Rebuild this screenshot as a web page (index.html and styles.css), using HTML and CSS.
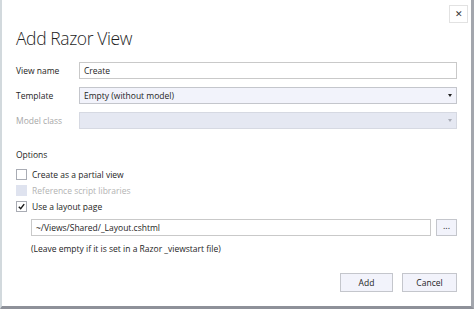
FILE: index.html
```html
<!DOCTYPE html>
<html>
<head>
<meta charset="utf-8">
<link rel="stylesheet" href="styles.css">
</head>
<body>
<div class="window">
  <div class="topbar">
    <div class="close">&#x2715;</div>
  </div>
  <h1 class="title">Add Razor View</h1>
  <div class="form">
    <label class="lbl">View name</label>
    <div class="input">Create</div>
    <label class="lbl">Template</label>
    <div class="select">Empty (without model)<span class="arrow"></span></div>
    <label class="lbl disabled">Model class</label>
    <div class="select off"><span class="arrow dim"></span></div>
  </div>
  <div class="options">
    <div class="opt-title">Options</div>
    <div class="check-row"><span class="box"></span><span>Create as a partial view</span></div>
    <div class="check-row disabled"><span class="box off"></span><span>Reference script libraries</span></div>
    <div class="check-row"><span class="box checked"><svg viewBox="0 0 10 10" width="9" height="9"><path d="M2 5.2 L4.1 7.4 L8 2.4" fill="none" stroke="#1a1a1a" stroke-width="1.6"/></svg></span><span>Use a layout page</span></div>
    <div class="layout-row">
      <div class="input wide">~/Views/Shared/_Layout.cshtml</div>
      <div class="browse">...</div>
    </div>
    <div class="hint">(Leave empty if it is set in a Razor _viewstart file)</div>
  </div>
  <div class="footer">
    <div class="btn">Add</div>
    <div class="btn">Cancel</div>
  </div>
</div>
</body>
</html>
```
FILE: styles.css
```css
html, body {
  margin: 0;
  padding: 0;
  background: #ffffff;
}
.window {
  box-sizing: border-box;
  width: 474px;
  height: 309px;
  background: #ffffff;
  border-left: 2px solid #d2d9dd;
  border-right: 3px solid #a3a6ad;
  border-bottom: 3px solid #8e9199;
  font-family: "Open Sans", "Noto Sans", sans-serif;
  font-size: 8.5px;
  color: #1e1e1e;
  display: flex;
  flex-direction: column;
}
.topbar {
  display: flex;
  justify-content: flex-end;
  padding: 5px 3px 0 0;
  height: 18px;
}
.close {
  box-sizing: border-box;
  width: 19px;
  height: 18px;
  border: 1px solid #e2e2e2;
  font-size: 9px;
  line-height: 16px;
  text-align: center;
  color: #333;
}
.title {
  margin: 3px 0 0 14px;
  font-size: 17.5px;
  font-weight: 300;
  letter-spacing: -0.4px;
  line-height: 24px;
  color: #1e1e1e;
}
.form {
  display: grid;
  grid-template-columns: 63px 1fr;
  row-gap: 8px;
  align-items: center;
  margin: 12px 14px 0 14px;
}
.lbl.disabled { color: #a7a7a7; }
.input, .select {
  box-sizing: border-box;
  height: 17px;
  border: 1px solid #c9c9c9;
  padding: 0 4px;
  line-height: 15px;
  background: #fff;
  position: relative;
}
.select { background: #f2f3fb; border-color: #c4c6cc; }
.select.off { background: #e5e8f2; border-color: #d6d9e2; height: 17px; }
.arrow {
  position: absolute;
  right: 4px;
  top: 6px;
  width: 0;
  height: 0;
  border-left: 2px solid transparent;
  border-right: 2px solid transparent;
  border-top: 3px solid #222;
}
.arrow.dim { border-top-color: #a9acb6; }
.options {
  margin: 20px 14px 0 14px;
}
.opt-title { line-height: 12px; margin-bottom: 5px; }
.check-row {
  display: flex;
  align-items: center;
  gap: 5px;
  height: 16px;
}
.check-row.disabled { color: #b3b3b3; }
.box {
  box-sizing: border-box;
  width: 11px;
  height: 11px;
  border: 1px solid #a9acb4;
  background: #fff;
  display: flex;
  align-items: center;
  justify-content: center;
}
.box.off { background: #dfe3ef; border-color: #dfe3ef; }
.layout-row {
  display: flex;
  gap: 5px;
  margin: 5px 0 0 15px;
}
.input.wide { flex: 1; }
.browse {
  box-sizing: border-box;
  width: 21px;
  height: 17px;
  border: 1px solid #c4c6cc;
  background: #f2f3fb;
  text-align: center;
  line-height: 11px;
  font-size: 9px;
}
.hint {
  margin: 7px 0 0 15px;
  line-height: 12px;
}
.footer {
  margin-top: auto;
  display: flex;
  justify-content: flex-end;
  gap: 9px;
  padding: 0 14px 14px 0;
}
.btn {
  box-sizing: border-box;
  height: 19px;
  border: 1px solid #c4c6cc;
  background: #f2f3fb;
  line-height: 17px;
  text-align: center;
  width: 53px;
}
.btn + .btn { width: 55px; }
```
